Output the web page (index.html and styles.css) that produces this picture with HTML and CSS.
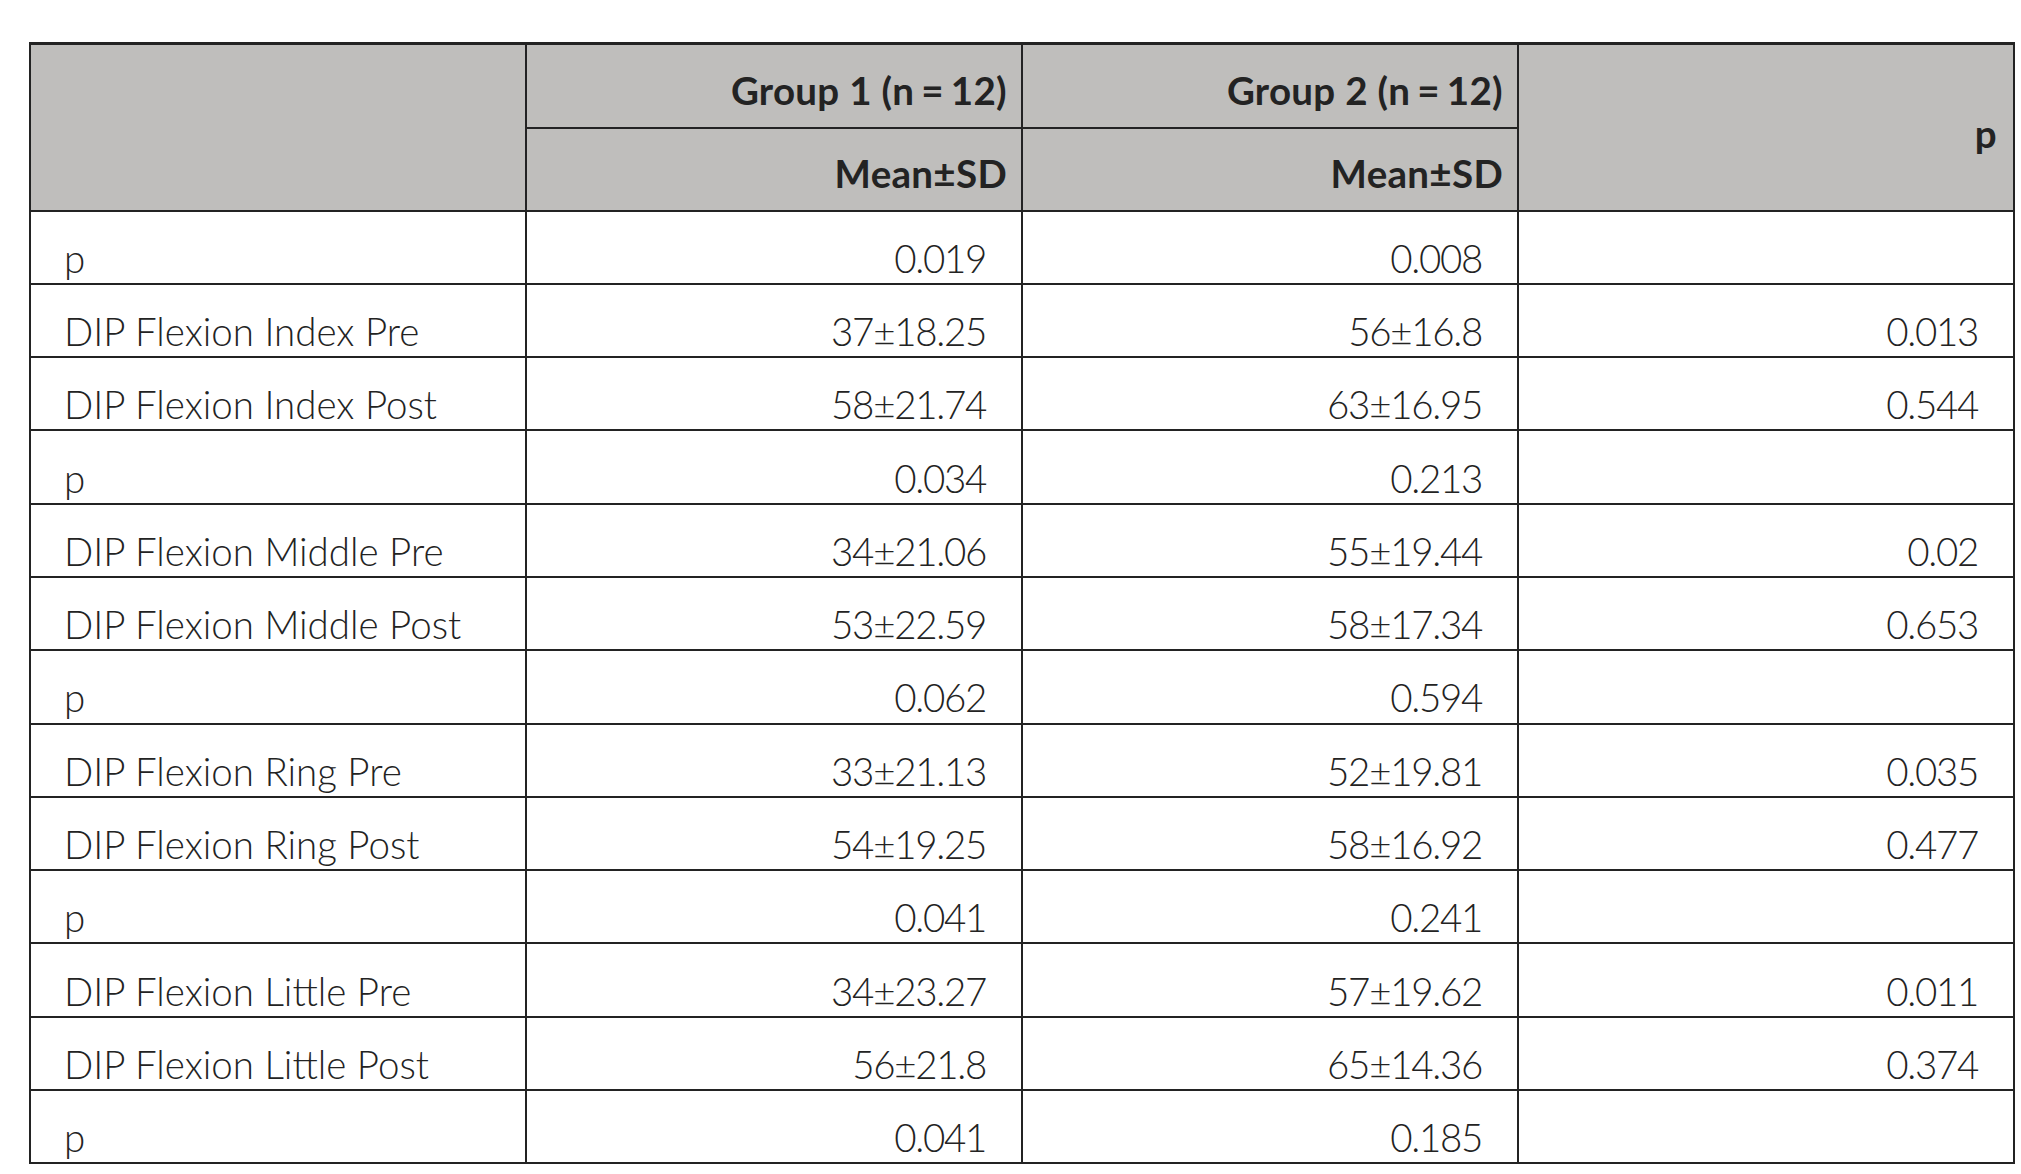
FILE: index.html
```html
<!DOCTYPE html>
<html>
<head>
<meta charset="utf-8">
<link rel="stylesheet" href="styles.css">
</head>
<body>
<table class="data">
  <colgroup><col><col><col><col></colgroup>
  <thead>
    <tr class="h1">
      <th class="blank" rowspan="2"></th>
      <th>Group 1 (n<span class="eq">=</span>12)</th>
      <th>Group 2 (n<span class="eq">=</span>12)</th>
      <th class="pcol" rowspan="2">p</th>
    </tr>
    <tr class="h2">
      <th>Mean±SD</th>
      <th>Mean±SD</th>
    </tr>
  </thead>
  <tbody>
    <tr><td class="lbl">p</td><td>0.019</td><td>0.008</td><td></td></tr>
    <tr><td class="lbl">DIP Flexion Index Pre</td><td>37±18.25</td><td>56±16.8</td><td>0.013</td></tr>
    <tr><td class="lbl">DIP Flexion Index Post</td><td>58±21.74</td><td>63±16.95</td><td>0.544</td></tr>
    <tr><td class="lbl">p</td><td>0.034</td><td>0.213</td><td></td></tr>
    <tr><td class="lbl">DIP Flexion Middle Pre</td><td>34±21.06</td><td>55±19.44</td><td>0.02</td></tr>
    <tr><td class="lbl">DIP Flexion Middle Post</td><td>53±22.59</td><td>58±17.34</td><td>0.653</td></tr>
    <tr><td class="lbl">p</td><td>0.062</td><td>0.594</td><td></td></tr>
    <tr><td class="lbl">DIP Flexion Ring Pre</td><td>33±21.13</td><td>52±19.81</td><td>0.035</td></tr>
    <tr><td class="lbl">DIP Flexion Ring Post</td><td>54±19.25</td><td>58±16.92</td><td>0.477</td></tr>
    <tr><td class="lbl">p</td><td>0.041</td><td>0.241</td><td></td></tr>
    <tr><td class="lbl">DIP Flexion Little Pre</td><td>34±23.27</td><td>57±19.62</td><td>0.011</td></tr>
    <tr><td class="lbl">DIP Flexion Little Post</td><td>56±21.8</td><td>65±14.36</td><td>0.374</td></tr>
    <tr><td class="lbl">p</td><td>0.041</td><td>0.185</td><td></td></tr>
  </tbody>
</table>
</body>
</html>
```

FILE: styles.css
```css
html, body {
  margin: 0;
  padding: 0;
  background: #ffffff;
}

body {
  font-family: "Lato", "Liberation Sans", sans-serif;
  color: #232323;
}

.data {
  margin: 42px 0 0 29px;
  width: 1986px;
  border-collapse: collapse;
  table-layout: fixed;
  border-top: 3px solid #232323;
}

.data th,
.data td {
  border: 2px solid #232323;
  box-sizing: border-box;
}

.data thead th {
  background: #bfbebc;
  font-weight: 700;
  font-size: 38.5px;
  line-height: 1.2;
  text-align: right;
  vertical-align: bottom;
  padding: 0 14px 13px 0;
  letter-spacing: 0.3px;
}

.data thead tr.h1 { height: 84px; }
.data thead tr.h2 { height: 83px; }

.data thead th.pcol {
  vertical-align: middle;
  padding: 12px 16px 0 0;
}

.data .eq {
  margin: 0 7px;
}

.data tbody tr {
  height: 73.3px;
}

.data tbody td {
  font-weight: 300;
  font-size: 38.5px;
  line-height: 1.2;
  text-align: right;
  vertical-align: bottom;
  padding: 0 35px 2px 0;
  white-space: nowrap;
  letter-spacing: -1.3px;
}

.data tbody td.lbl {
  text-align: left;
  padding: 0 0 2px 33px;
  letter-spacing: 0;
}
```
